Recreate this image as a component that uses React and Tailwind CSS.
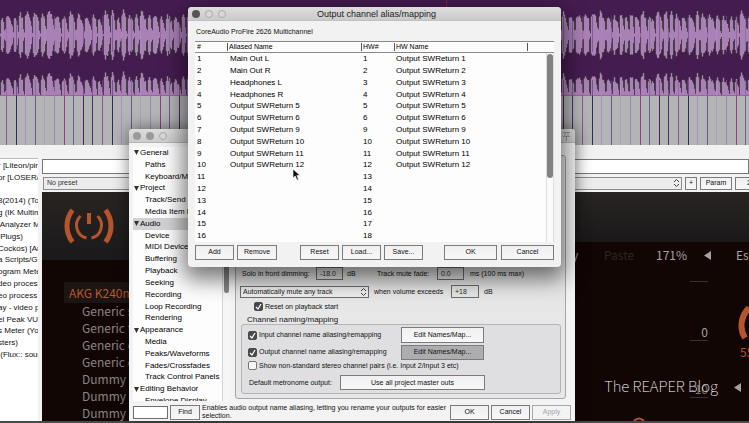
import React from "react";

const ui = "font-['Liberation_Sans',Arial,sans-serif]";
const plug = "font-['Noto_Sans_CJK_SC','Open_Sans',sans-serif]";
const btn =
  "flex items-center justify-center border border-[#7b7b7e] bg-gradient-to-b from-[#f0f0f1] to-[#f7f7f8] text-[7px] leading-[8px] text-[#111]";
const field = "border border-[#6d6d70] bg-transparent px-[3px] text-[7px] leading-[8px] text-[#333] outline-none";

const WAVE_W = 1920;

function noise(n) {
  const v = Math.sin(n * 127.1 + 11.7) * 43758.5453;
  return v - Math.floor(v);
}

// Peak envelope: bursts that jump to full level, decay, and end in a narrow gap.
function envelope(seed) {
  const out = [];
  let x = 0;
  let burst = 0;
  while (x < WAVE_W) {
    const len = 5 + Math.floor(noise(burst + seed) * 4);
    const loud = 18 + noise(burst * 3 + seed) * 8;
    for (let i = 0; i < len; i++) {
      const t = i / (len - 1);
      if (i === 0) out.push(1 + noise(x + seed) * 5);
      else if (i === 1) out.push(loud * 0.8);
      else if (i === len - 1) out.push(4 + noise(x * 2 + seed) * 6);
      else out.push(loud * (1.1 - 0.5 * t * t) - noise(x + i + seed) * 5);
    }
    x += len;
    burst++;
  }
  return out;
}

const LEVELS = envelope(3);

function steps(mid, levels, grow) {
  let up = "M0 " + mid;
  let down = "";
  levels.forEach((a, i) => {
    const top = (mid - a - grow).toFixed(1);
    const bottom = (mid + a + grow).toFixed(1);
    up += `L${i} ${top}H${i + 1}`;
    down = `L${i + 1} ${bottom}H${i}` + down;
  });
  return up + down + "Z";
}

const HALO = LEVELS.map((a, i) => Math.max(a, LEVELS[i - 1] || 0, LEVELS[i + 1] || 0));

const LINE_COLORS = ["#92568f", "#3b2560", "#b48bc0", "#6b5590", "#b39abb", "#9a86ac", "#8a3f88", "#6a5f86", "#57205c", "#46306a"];

function Waveform() {
  const lines = [];
  for (let i = 0; i * 9.6 < WAVE_W; i++) lines.push(i);
  return (
    <svg width={WAVE_W} height="145" className="block shrink-0" aria-hidden="true">
      <rect width={WAVE_W} height="96" fill="#451c50" />
      <rect y="96" width={WAVE_W} height="49" fill="#b3b4b6" />
      <svg width={WAVE_W} height="96">
        <path d={steps(35, HALO, 0)} fill="#4a3d4a" />
        <path d={steps(35, LEVELS, 0)} fill="#a981b6" />
        <path d={steps(97, HALO, 0)} fill="#4a3d4a" />
        <path d={steps(97, LEVELS, 0)} fill="#a981b6" />
      </svg>
      <rect y="95" width={WAVE_W} height="1" fill="#a35fa0" />
      {lines.map((i) => (
        <g key={i} fill={LINE_COLORS[i % 10]}>
          <rect x={Math.round(6 + i * 9.6)} y="96" width="1" height="49" />
          <rect x={Math.round(6 + i * 9.6)} y="16" width="1" height="36" opacity="0.4" />
          <rect x={Math.round(6 + i * 9.6)} y="80" width="1" height="16" opacity="0.5" />
        </g>
      ))}
      <rect x="446" width="1" height="8" fill="#8c1f3c" />
    </svg>
  );
}

function Lights({ first, second }) {
  return (
    <div className="flex gap-[5px]">
      <span className={`size-[8px] rounded-full ${first}`} />
      <span className={`size-[8px] rounded-full ${second}`} />
      <span className="size-[8px] rounded-full border border-[#aaa] bg-[#d8d8d8]" />
    </div>
  );
}

function UpDown() {
  return (
    <svg width="7" height="9" viewBox="0 0 7 9" className="pointer-events-none absolute right-[2px] top-1/2 -translate-y-1/2" fill="none" stroke="#444" aria-hidden="true">
      <path d="M1 3.5 3.5 1 6 3.5M1 5.5 3.5 8 6 5.5" />
    </svg>
  );
}

const PLUGINS = [
  "r [Liteon/pir", "or [LOSER/W", "", "8(2014) (Ton", "g (IK Multim", " Analyzer M",
  " Plugs)", "Cockos) [An", "a Scripts/GI", "ogram Mete", "deo process", "eo process", "ay - video p",
  "el Peak VU", "s Meter (You", "sters)", " (Flux:: sour",
];

function PluginList() {
  return (
    <div className="w-[38px] overflow-hidden">
      <ul className="-ml-[2px] grid h-[201px] auto-rows-fr text-[8px] leading-none text-[#111]">
        {PLUGINS.map((p, i) => (
          <li key={i} className="flex items-center whitespace-pre">{p}</li>
        ))}
      </ul>
    </div>
  );
}

function PowerLogo() {
  return (
    <svg width="50" height="36" viewBox="0 0 50 36" fill="none" stroke="#b5552c" aria-hidden="true">
      <path d="M8.500 2A26 26 0 0 0 8.500 34" strokeWidth="5" />
      <path d="M41.500 2A26 26 0 0 1 41.500 34" strokeWidth="5" />
      <path d="M16.500 8A13 13 0 0 0 22.500 30" strokeWidth="3" />
      <path d="M33.500 8A13 13 0 0 1 27.500 30" strokeWidth="3" />
      <path d="M25 5V16" strokeWidth="4" />
    </svg>
  );
}

const PRESETS = ["Generic speakers", "Generic flat", "Generic cans", "Generic desktop", "Dummy Left", "Dummy Right", "Dummy Both"];

function Left() {
  return <svg width="7" height="9" viewBox="0 0 7 9" aria-hidden="true"><path d="M7 0V9L0 4.500Z" fill="#a5a0a3" /></svg>;
}

function PluginView() {
  return (
    <div className={`flex min-h-0 flex-1 justify-between overflow-hidden bg-[#120605] ${plug}`}>
      <div className="w-[240px]">
        <div className="flex h-[68px] items-center bg-gradient-to-b from-[#272422] to-[#1c191b] pl-[22px]">
          <PowerLogo />
        </div>
        <div className="ml-[22px] mt-[22px] text-[12px] leading-[16px] text-[#8b8485]">
          <p className="flex h-[21px] items-center bg-[#1d1513] pl-[5px] text-[#b9572e]">AKG K240mkII</p>
          <ul className="grid h-[118px] auto-rows-fr pl-[18px]">
            {PRESETS.map((p) => <li key={p} className="flex items-center">{p}</li>)}
          </ul>
        </div>
      </div>
      <div className="h-[50px] flex-1 bg-gradient-to-b from-[#272422] to-[#1c191b]" />
      <div className="flex w-[177px] flex-col text-[12px] text-[#a5a0a3]">
        <div className="h-[50px] shrink-0 bg-gradient-to-b from-[#272422] to-[#1c191b]" />
        <div className="flex h-[26px] shrink-0 items-center overflow-hidden whitespace-nowrap leading-[20px]">
          <span className="w-[32px]">y</span>
          <span className="w-[52px] text-[#2f2423]">Paste</span>
          <span className="w-[48px]">171%</span>
          <span className="w-[32px]"><Left /></span>
          <span>Es</span>
        </div>
        <div className="flex justify-between">
          <div className="flex w-[136px] flex-col items-end text-[12px] leading-[16px]">
            <div className="mt-[13px] w-[18px] border-b border-[#39302f]" />
            <div className="mt-[42px] w-[18px] border-b border-[#39302f] text-right">0</div>
            <div className="mt-[40px] w-[18px] border-b border-[#39302f] text-right text-[#777]">-10</div>
          </div>
          <div className="w-[15px] overflow-hidden pt-[34px]">
            <svg width="12" height="42" viewBox="0 0 12 42" className="ml-[3px]" aria-hidden="true">
              <path d="M12 6A24 24 0 0 0 8 36" fill="none" stroke="#b5552c" strokeWidth="6" />
            </svg>
            <div className="pl-[6px] text-[12px] leading-[16px] text-[#b5552c]">55</div>
            <div className="mt-[23px]"><Left /></div>
          </div>
        </div>
        <svg width="12" height="4" viewBox="0 0 12 4" className="ml-[61px] mt-auto shrink-0" aria-hidden="true">
          <path d="M1 4Q6 -1 11 4" fill="none" stroke="#b5552c" strokeWidth="2" />
        </svg>
      </div>
    </div>
  );
}

function FxWindow() {
  return (
    <section className="flex min-h-0 flex-1 flex-col border-b-2 border-[#4a4a4c] bg-[#f2f2f3]">
      <div className="h-[13px] shrink-0" />
      <div className="flex min-h-0 flex-1 gap-[4px]">
        <div className="border-t border-[#bbb] bg-white pt-[1px]"><PluginList /></div>
        <div className="flex min-w-0 flex-1 flex-col">
          <input aria-label="Comment" className="mt-[1px] h-[15px] w-full shrink-0 border border-[#77777a] bg-white" />
          <div className="flex h-[18px] shrink-0 items-center gap-[3px] overflow-hidden pl-[1px]">
            <div className="relative min-w-0 flex-1">
              <select aria-label="Preset" className="block h-[13px] w-full appearance-none border border-[#8d8d90] bg-[#ececed] pl-[3px] text-[7px] leading-[8px] text-[#333]">
                <option>No preset</option>
              </select>
              <UpDown />
            </div>
            <button className={`${btn} h-[13px] w-[12px]`}>+</button>
            <button className={`${btn} h-[13px] w-[32px]`}>Param</button>
            <button className={`${btn} -mr-[14px] h-[13px] w-[28px]`}>2</button>
          </div>
          <PluginView />
        </div>
      </div>
    </section>
  );
}

const TREE = [
  ["General", 1], ["Paths"], ["Keyboard/Multitouch"], ["Project", 1], ["Track/Send Defaults"], ["Media Item Defaults"],
  ["Audio", 1], ["Device"], ["MIDI Devices"], ["Buffering"], ["Playback"], ["Seeking"], ["Recording"], ["Loop Recording"],
  ["Rendering"], ["Appearance", 1], ["Media"], ["Peaks/Waveforms"], ["Fades/Crossfades"], ["Track Control Panels"],
  ["Editing Behavior", 1], ["Envelope Display"],
];

function Tick({ id, children, on }) {
  return (
    <div className="flex items-center gap-[2px]">
      <span className="relative flex size-[9px]">
        <input
          id={id}
          type="checkbox"
          defaultChecked={on}
          className="peer size-[9px] appearance-none rounded-[2px] border border-[#77777a] bg-[#f6f6f7] checked:border-[#4a4a4d] checked:bg-[#4a4a4d]"
        />
        <svg viewBox="0 0 9 9" className="pointer-events-none absolute inset-0 hidden peer-checked:block" fill="none" stroke="#fff" strokeWidth="1.2" aria-hidden="true">
          <path d="M2 5 4 7 7 2" />
        </svg>
      </span>
      <label htmlFor={id} className="whitespace-nowrap">{children}</label>
    </div>
  );
}

function Preferences() {
  return (
    <section className="absolute left-[129px] top-[129px] flex h-[292px] w-[446px] flex-col rounded-t-[4px] bg-[#f3f3f4] shadow-[0_0_16px_rgba(0,0,0,0.5)]">
      <header className="flex h-[14px] shrink-0 items-center justify-between rounded-t-[4px] border-b border-[#b5b5b5] bg-gradient-to-b from-[#dcdcdc] to-[#cccccc] px-[4px]">
        <Lights first="bg-[#9a9a9a]" second="bg-[#9a9a9a]" />
        <svg width="9" height="10" viewBox="0 0 9 10" fill="none" stroke="#999" aria-hidden="true">
          <path d="M1 1.500H8M3 1.500V5M6 1.500V5M1 5.500H8M4.500 6V10" />
        </svg>
      </header>
      <div className="flex min-h-0 flex-1 gap-[5px] pl-[4px] pr-[9px] pt-[4px]">
        <nav className="flex h-[254px] w-[97px] overflow-hidden bg-[#fdfdfd]">
          <ul className="grid h-[260px] min-w-0 flex-1 auto-rows-fr text-[8px] leading-none text-black">
            {TREE.map(([name, group]) => (
              <li key={name} className={`flex items-center overflow-hidden whitespace-nowrap ${group ? "gap-[1px] pl-[1px]" : "pl-[12px]"} ${name === "Audio" ? "bg-[#d2d2d4]" : ""}`}>
                {group ? <svg width="5" height="5" viewBox="0 0 5 5" aria-hidden="true"><path d="M0 0H5L2.500 5Z" fill="#333" /></svg> : null}
                {name}
              </li>
            ))}
          </ul>
          <div className="w-[8px] border-l border-[#d5d5d5] bg-[#f6f6f6] px-[1px] pt-[50px]">
            <div className="h-[96px] rounded-full bg-[#858587]" />
          </div>
        </nav>
        <div className="mt-[8px] h-[244px] min-w-0 flex-1 rounded-[3px] border border-[#a5a5a8] bg-[#e7e7e8] px-[4px] pt-[111px] text-[7px] leading-[8px] text-[#111]">
          <div className="flex h-[13px] items-center whitespace-nowrap">
            <label htmlFor="solo" className="w-[76px] pl-[2px]">Solo in front dimming:</label>
            <input id="solo" defaultValue="-18.0" className={`${field} h-[13px] w-[27px]`} />
            <span className="w-[34px] pl-[4px]">dB</span>
            <label htmlFor="fade" className="w-[60px]">Track mute fade:</label>
            <input id="fade" defaultValue="0.0" className={`${field} h-[13px] w-[27px]`} />
            <span className="pl-[6px]">ms (100 ms max)</span>
          </div>
          <div className="mt-[5px] flex h-[13px] items-center whitespace-nowrap">
            <div className="relative w-[129px]">
              <select aria-label="Automatic mute" className="block h-[12px] w-full appearance-none border border-[#6d6d70] bg-[#eeeeef] pl-[2px] text-[7px] leading-[8px] text-[#222]">
                <option>Automatically mute any track</option>
              </select>
              <UpDown />
            </div>
            <label htmlFor="vol" className="w-[82px] pl-[5px]">when volume exceeds</label>
            <input id="vol" defaultValue="+18" className={`${field} h-[13px] w-[28px]`} />
            <span className="pl-[5px]">dB</span>
          </div>
          <div className="mt-[4px] pl-[14px]"><Tick id="reset" on>Reset on playback start</Tick></div>
          <fieldset className="mt-[4px]">
            <legend className="pl-[7px] text-[8px] leading-[9px]">Channel naming/mapping</legend>
            <div className="ml-[1px] h-[70px] rounded-[3px] border border-[#b4b4b7] bg-[#dfdfe1] px-[6px] pt-[2px]">
              <div className="flex h-[16px] items-center">
                <div className="w-[153px]"><Tick id="in" on>Input channel name aliasing/remapping</Tick></div>
                <button className={`${btn} h-[16px] w-[83px]`}>Edit Names/Map...</button>
              </div>
              <div className="mt-[1px] flex h-[16px] items-center">
                <div className="w-[153px]"><Tick id="out" on>Output channel name aliasing/remapping</Tick></div>
                <button className="h-[15px] w-[83px] border border-[#7b7b7e] bg-[#adadb0] leading-[8px]">Edit Names/Map...</button>
              </div>
              <div className="mt-[1px]"><Tick id="pairs">Show non-standard stereo channel pairs (i.e. Input 2/Input 3 etc)</Tick></div>
              <div className="mt-[5px] flex items-center">
                <span className="w-[92px] whitespace-nowrap pl-[1px]">Default metronome output:</span>
                <button className={`${btn} h-[15px] w-[145px]`}>Use all project master outs</button>
              </div>
            </div>
          </fieldset>
        </div>
      </div>
      <footer className="flex h-[20px] shrink-0 items-center gap-[2px] pl-[4px] pr-[4px] pt-[2px] text-[7px] leading-[8px] text-[#111]">
        <input aria-label="Find text" className="h-[13px] w-[35px] border border-[#6d6d70] bg-white" />
        <button className={`${btn} h-[15px] w-[30px]`}>Find</button>
        <p className="min-w-0 flex-1 whitespace-nowrap">
          Enables audio output name aliasing, letting you rename your outputs for easier
          <br />
          selection.
        </p>
        <button className={`${btn} h-[15px] w-[39px]`}>OK</button>
        <button className={`${btn} h-[15px] w-[39px]`}>Cancel</button>
        <button disabled className="h-[15px] w-[39px] border border-[#a9a9ac] text-[#a5a5a8]">Apply</button>
      </footer>
    </section>
  );
}

const ROWS = [
  ["Main Out L", "Output SWReturn 1"], ["Main Out R", "Output SWReturn 2"], ["Headphones L", "Output SWReturn 3"],
  ["Headphones R", "Output SWReturn 4"], ["Output SWReturn 5", "Output SWReturn 5"], ["Output SWReturn 6", "Output SWReturn 6"],
  ["Output SWReturn 9", "Output SWReturn 9", 9], ["Output SWReturn 10", "Output SWReturn 10", 10],
  ["Output SWReturn 11", "Output SWReturn 11", 11], ["Output SWReturn 12", "Output SWReturn 12", 12],
  ["", "", 13], ["", "", 14], ["", "", 15], ["", "", 16], ["", "", 17], ["", "", 18],
];

function MappingDialog() {
  const th = "p-0 font-normal";
  const bar = "block border-l border-[#555] pl-[1px] leading-[8px]";
  return (
    <section role="dialog" aria-label="Output channel alias/mapping" className="absolute left-[188px] top-[7px] w-[373px] rounded-[4px] bg-[#f2f2f3] pb-[7px] shadow-[0_8px_22px_4px_rgba(0,0,0,0.55)]">
      <header className="grid h-[14px] grid-cols-[1fr_auto_1fr] items-center rounded-t-[4px] border-b border-[#c0c0c0] bg-gradient-to-b from-[#dedede] to-[#cacaca] pl-[4px]">
        <Lights first="bg-[#555557]" second="border border-[#aaa] bg-[#d8d8d8]" />
        <h1 className="text-[9px] leading-[12px] text-[#222]">Output channel alias/mapping</h1>
      </header>
      <p className="pl-[8px] pt-[6px] text-[7px] leading-[9px] text-[#111]">CoreAudio ProFire 2626 Multichannel</p>
      <div className="relative mx-[7px] mt-[5px] bg-[#fdfdfd]">
        <table className="w-full table-fixed border-collapse text-left text-[8px] leading-none text-black">
          <colgroup>
            <col className="w-[32px]" /><col className="w-[134px]" /><col className="w-[33px]" /><col className="w-[133px]" /><col />
          </colgroup>
          <thead>
            <tr className="h-[11px] border-y border-[#8a8a8d] text-[7px]">
              <th className="p-0 pl-[2px] font-normal leading-[8px]">#</th>
              <th className={th}><span className={bar}>Aliased Name</span></th>
              <th className={th}><span className={bar}>HW#</span></th>
              <th className={th}><span className={bar}>HW Name</span></th>
              <th className={th}><span className={bar}>&nbsp;</span></th>
            </tr>
          </thead>
          <tbody>
            {ROWS.map(([alias, hw, n], i) => (
              <tr key={i} className="h-[12px] nth-[5n]:h-[11px]">
                <td className="p-0 pl-[2px]">{i + 1}</td>
                <td className="p-0 pl-[3px]">{alias}</td>
                <td className="p-0 pl-[2px]">{n || i + 1}</td>
                <td className="p-0 pl-[2px]">{hw}</td>
                <td className="p-0" />
              </tr>
            ))}
          </tbody>
        </table>
        <div className="absolute bottom-0 right-0 top-[12px] w-[8px] border-x border-[#dcdcdc] bg-[#fafafa] pt-[1px]">
          <div className="h-[124px] rounded-full bg-[#828284]" />
        </div>
      </div>
      <div className="mx-[7px] mt-[3px] flex gap-[3px]">
        <button className={`${btn} h-[15px] w-[39px]`}>Add</button>
        <button className={`${btn} h-[15px] w-[40px]`}>Remove</button>
        <div className="ml-auto flex gap-[3px]">
          <button className={`${btn} h-[15px] w-[39px]`}>Reset</button>
          <button className={`${btn} h-[15px] w-[39px]`}>Load...</button>
          <button className={`${btn} h-[15px] w-[39px]`}>Save...</button>
        </div>
        <div className="ml-[18px] flex gap-[4px]">
          <button className={`${btn} h-[15px] w-[53px]`}>OK</button>
          <button className={`${btn} h-[15px] w-[53px]`}>Cancel</button>
        </div>
      </div>
    </section>
  );
}

export default function App() {
  return (
    <main className={`relative flex h-screen flex-col overflow-hidden bg-[#451c50] ${ui}`}>
      <div className="flex h-[145px] shrink-0 overflow-hidden"><Waveform /></div>
      <FxWindow />
      <Preferences />
      <MappingDialog />
      <svg width="9" height="13" viewBox="0 0 9 13" className="absolute left-[292px] top-[168px]" aria-hidden="true">
        <path d="M1 1V10L3.200 8 5 12 6.500 11.300 4.800 7.500H8Z" fill="#111" stroke="#fff" strokeWidth="0.600" />
      </svg>
      <div className="absolute bottom-[22px] right-[31px] whitespace-nowrap font-['Noto_Sans_CJK_SC','Open_Sans',sans-serif] text-[15px] font-thin leading-[30px] text-white">
        The REAPER Blog
      </div>
    </main>
  );
}
